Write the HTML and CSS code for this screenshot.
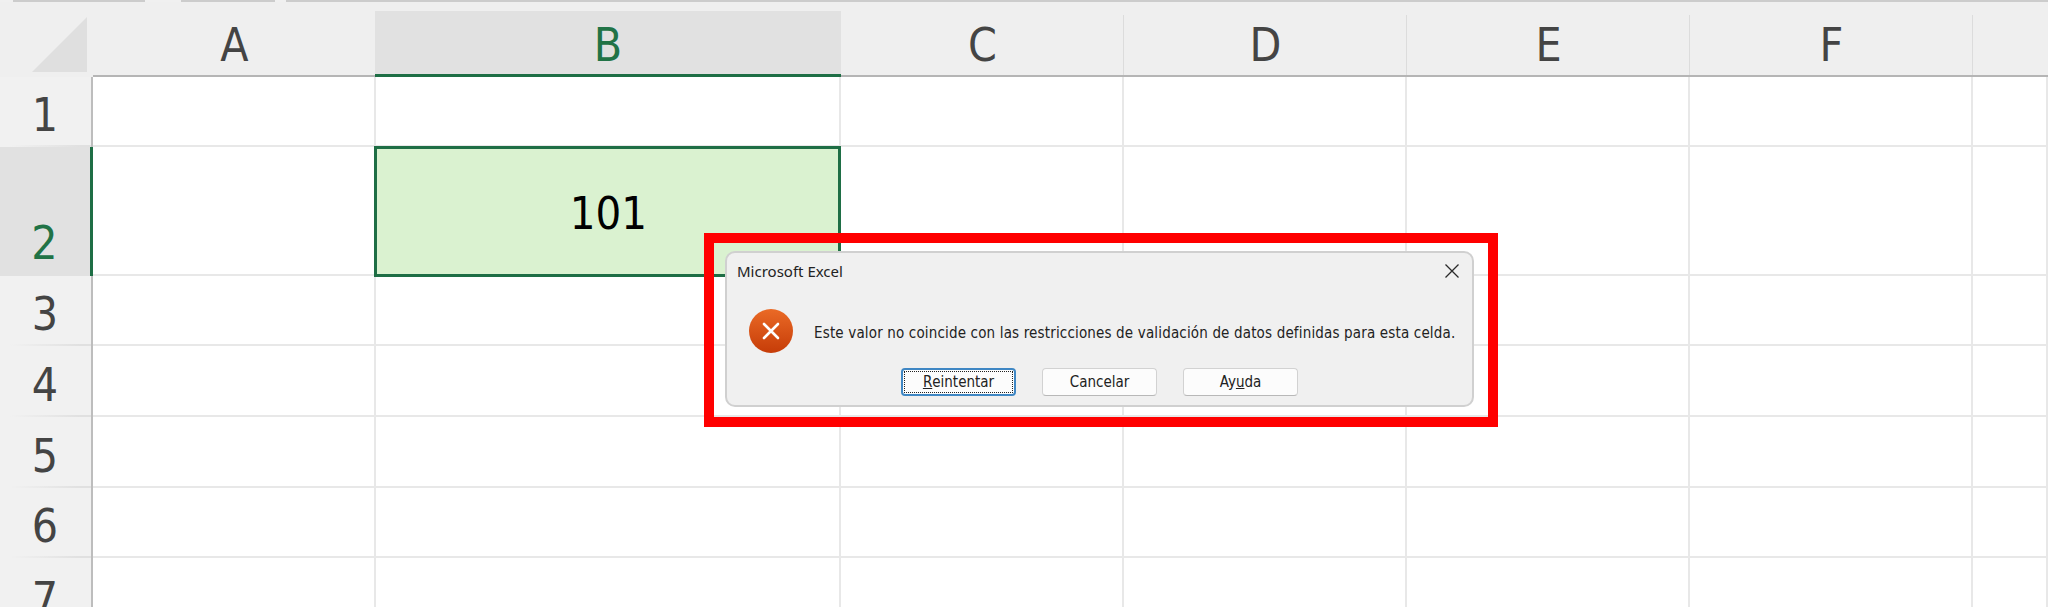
FILE: index.html
```html
<!DOCTYPE html>
<html lang="es">
<head>
<meta charset="utf-8">
<title>Microsoft Excel</title>
<link rel="stylesheet" href="styles.css">
</head>
<body>
<div class="strip"><span class="seg seg-a"></span><span class="seg seg-b"></span><span class="seg seg-c"></span></div>
<div class="sheet">
  <div class="corner"><svg class="corner-tri" viewBox="0 0 55 55"><polygon points="55,0 55,55 0,55"/></svg></div>
  <div class="col">A</div><div class="col col-sel">B</div><div class="col">C</div><div class="col">D</div><div class="col">E</div><div class="col">F</div><div class="col col-end"></div>

  <div class="row">1</div><div class="cell"></div><div class="cell"></div><div class="cell"></div><div class="cell"></div><div class="cell"></div><div class="cell"></div><div class="cell"></div>
  <div class="row row-sel">2</div><div class="cell"></div><div class="cell cell-sel">101</div><div class="cell"></div><div class="cell"></div><div class="cell"></div><div class="cell"></div><div class="cell"></div>
  <div class="row">3</div><div class="cell"></div><div class="cell"></div><div class="cell"></div><div class="cell"></div><div class="cell"></div><div class="cell"></div><div class="cell"></div>
  <div class="row">4</div><div class="cell"></div><div class="cell"></div><div class="cell"></div><div class="cell"></div><div class="cell"></div><div class="cell"></div><div class="cell"></div>
  <div class="row">5</div><div class="cell"></div><div class="cell"></div><div class="cell"></div><div class="cell"></div><div class="cell"></div><div class="cell"></div><div class="cell"></div>
  <div class="row">6</div><div class="cell"></div><div class="cell"></div><div class="cell"></div><div class="cell"></div><div class="cell"></div><div class="cell"></div><div class="cell"></div>
  <div class="row row-last">7</div><div class="cell"></div><div class="cell"></div><div class="cell"></div><div class="cell"></div><div class="cell"></div><div class="cell"></div><div class="cell"></div>
</div>

<div class="frame">
  <div class="dialog">
    <div class="titlebar">
      <span class="title">Microsoft Excel</span>
      <svg class="close" viewBox="0 0 14 14"><path d="M0.5 0.5 L13.5 13.5 M13.5 0.5 L0.5 13.5"/></svg>
    </div>
    <div class="body">
      <svg class="err" viewBox="0 0 44 44">
        <defs><linearGradient id="errg" x1="0" y1="0" x2="0" y2="1"><stop offset="0" stop-color="#ea6a26"/><stop offset="1" stop-color="#c63c08"/></linearGradient></defs>
        <circle cx="22" cy="22" r="22" fill="url(#errg)"/>
        <path d="M15 15 L29 29 M29 15 L15 29" stroke="#fff" stroke-width="2.6" stroke-linecap="round" fill="none"/>
      </svg>
      <p class="msg">Este valor no coincide con las restricciones de validación de datos definidas para esta celda.</p>
    </div>
    <div class="buttons">
      <button class="btn btn-default"><span class="focus"><u>R</u>eintentar</span></button>
      <button class="btn">Cancelar</button>
      <button class="btn">Ay<u>u</u>da</button>
    </div>
  </div>
</div>
</body>
</html>
```

FILE: styles.css
```css
* { box-sizing: border-box; }
html, body { margin: 0; padding: 0; height: 100%; overflow: hidden; background: #fff; }
body { position: relative; width: 2048px; height: 607px; font-family: "DejaVu Sans", sans-serif; }

.strip { display: flex; height: 2px; background: #f0f0f0; }
.seg { height: 2px; background: #cccccc; }
.seg-a { width: 132px; margin-left: 13px; }
.seg-b { width: 94px; margin-left: 36px; }
.seg-c { flex: 1; margin-left: 11px; }

.sheet {
  display: grid;
  grid-template-columns: 93px 283px 465px 283px 283px 283px 283px 1fr;
  grid-template-rows: 75px 70px 129px 70px 71px 71px 70px 71px;
  height: 605px;
  overflow: hidden;
  font-stretch: condensed;
}

.corner { background: #efefef; display: flex; justify-content: flex-end; align-items: flex-start; padding: 15px 6px 0 0; }
.corner-tri { width: 55px; height: 55px; display: block; }
.corner-tri polygon { fill: #dfdfdf; }

.col {
  background: #efefef linear-gradient(#dcdcdc, #dcdcdc) no-repeat right 0 top 13px / 1px 100%;
  border-bottom: 2px solid #b5b5b5;
  display: flex; align-items: center; justify-content: center;
  font-size: 46px; line-height: 1; color: #444;
  padding-top: 12px;
}
.col-end { background: #efefef; }
.col-sel { background: linear-gradient(#efefef 9px, #e1e1e1 9px); color: #217346; border-bottom: 3px solid #1e6e45; padding-top: 13px; margin-left: -1px; }

.row {
  background: #f1f1f1 linear-gradient(to right, #f1f1f1 10px, #e0e0e0 90%) no-repeat left bottom / 100% 2px;
  border-right: 2px solid #bdbdbd;
  display: flex; align-items: flex-end; justify-content: center;
  font-size: 46px; line-height: 1; color: #444;
  padding: 0 1px 9px 0;
}
.row-sel { background: #e1e1e1; color: #217346; border-right: 3px solid #1e6e45; padding-bottom: 10px; }
.row-last { background: #f1f1f1; align-items: flex-start; padding: 18px 1px 0 0; }

.cell { border-right: 2px solid #e8e8e8; border-bottom: 2px solid #e8e8e8; }

.cell-sel {
  position: relative; z-index: 1;
  background: #daf2d0;
  border: 0;
  outline: 3px solid #1e6e45;
  outline-offset: -2px;
  margin: 0 1px 0 -1px;
  display: flex; align-items: center; justify-content: center;
  font-size: 45px; line-height: 1; color: #000;
  padding: 3px 0 0 2px;
}

.frame {
  position: absolute; z-index: 2;
  left: 704px; top: 233px;
  width: 794px; height: 194px;
  border: 10px solid #ff0000;
  padding: 8px 14px 10px 11px;
}
.dialog {
  height: 100%;
  background: #f0f0f0;
  border: 2px solid #d0d0d0;
  border-radius: 10px;
  display: flex; flex-direction: column;
  color: #1a1a1a;
  font-stretch: normal;
}
.titlebar { display: flex; align-items: center; justify-content: space-between; height: 35px; padding: 0 13px 0 10px; }
.title { font-family: "Noto Sans", sans-serif; font-size: 15px; color: #222; }
.close { width: 14px; height: 14px; }
.close path { stroke: #2a2a2a; stroke-width: 1.3; fill: none; }
.body { display: flex; align-items: center; height: 80px; padding: 0 0 0 22px; }
.err { width: 44px; height: 44px; flex: none; margin-top: 6px; }
.msg { margin: 10px 0 0 21px; font-family: "DejaVu Sans", sans-serif; font-stretch: condensed; font-size: 15px; color: #222; white-space: nowrap; letter-spacing: 0.16px; }
.buttons { display: flex; justify-content: center; gap: 26px; margin-top: 0; }
.btn {
  width: 115px; height: 28px; padding: 0;
  background: #fcfcfc;
  border: 1px solid #d2d2d2; border-bottom-color: #b8b8b8;
  border-radius: 4px;
  font-family: "DejaVu Sans", sans-serif; font-stretch: condensed; font-size: 15px; color: #222;
  display: flex; align-items: center; justify-content: center;
}
.btn-default { border: 2px solid #3f87c4; padding: 1px; }
.focus { width: 100%; height: 100%; border: 1px dotted #222; display: flex; align-items: center; justify-content: center; }
```
